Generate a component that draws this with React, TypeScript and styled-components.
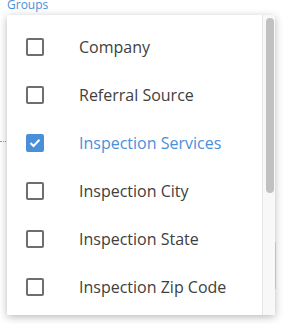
import styled, { createGlobalStyle } from "styled-components";

const GlobalStyle = createGlobalStyle`
  html, body {
    margin: 0;
    padding: 0;
    background: #ffffff;
    font-family: "Open Sans", "Liberation Sans", sans-serif;
  }
`;

const Page = styled.div`
  position: relative;
  width: 283px;
  height: 324px;
  overflow: hidden;
  background: #ffffff;
`;

const Label = styled.div`
  padding: 0 0 0 7px;
  margin-top: -3px;
  font-size: 12px;
  line-height: 16px;
  color: #4a90d9;
`;

const Field = styled.div`
  margin-top: 128px;
  width: 10px;
  height: 1px;
  border-top: 1px dotted #9a9a9a;
`;

const EdgeLine = styled.div`
  margin: 99px 0 0 275px;
  width: 1px;
  height: 47px;
  background: #dedede;
`;

const Menu = styled.div`
  position: absolute;
  top: 15px;
  left: 7px;
  width: 268px;
  height: 300px;
  display: flex;
  background: #ffffff;
  box-shadow: 0 2px 8px rgba(0, 0, 0, 0.28);
`;

const List = styled.ul`
  flex: 1;
  list-style: none;
  margin: 0;
  padding: 8px 0 0;
  overflow: hidden;
`;

const Row = styled.li<{ $checked?: boolean }>`
  display: flex;
  align-items: center;
  height: 48px;
  padding-left: 19px;
  font-size: 16px;
  color: ${(p) => (p.$checked ? "#4a90d9" : "#404040")};
`;

const Box = styled.span<{ $checked?: boolean }>`
  box-sizing: border-box;
  width: 18px;
  height: 18px;
  margin-right: 35px;
  border-radius: 2px;
  border: 2px solid ${(p) => (p.$checked ? "#4a90d9" : "#6e6e6e")};
  background: ${(p) => (p.$checked ? "#4a90d9" : "transparent")};
  display: flex;
  align-items: center;
  justify-content: center;
`;

const Track = styled.div`
  width: 13px;
  background: #f8f8f8;
  border-left: 1px solid #e6e6e6;
  padding: 3px 2px 0 3px;
  box-sizing: border-box;
`;

const Thumb = styled.div`
  width: 8px;
  height: 175px;
  border-radius: 4px;
  background: #c1c1c1;
`;

const items = [
  "Company",
  "Referral Source",
  "Inspection Services",
  "Inspection City",
  "Inspection State",
  "Inspection Zip Code",
];

export default function App() {
  return (
    <>
      <GlobalStyle />
      <Page>
        <Label>Groups</Label>
        <Field />
        <EdgeLine />
        <Menu>
          <List>
            {items.map((name) => {
              const checked = name === "Inspection Services";
              return (
                <Row key={name} $checked={checked}>
                  <Box $checked={checked}>
                    {checked && (
                      <svg width="12" height="10" viewBox="0 0 12 10">
                        <path d="M1.5 5 L4.5 8 L10.5 1.8" fill="none" stroke="#fff" strokeWidth="2" />
                      </svg>
                    )}
                  </Box>
                  {name}
                </Row>
              );
            })}
          </List>
          <Track>
            <Thumb />
          </Track>
        </Menu>
      </Page>
    </>
  );
}
